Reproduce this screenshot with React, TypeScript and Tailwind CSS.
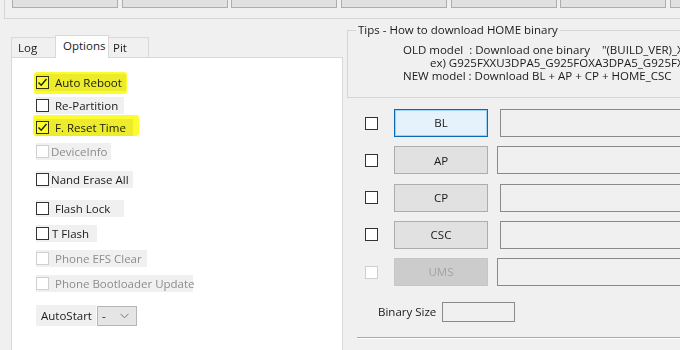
import React from "react"

type Opt = {
  label: string
  checked?: boolean
  disabled?: boolean
  gap: number
  width: number
  after: number
}

const options: Opt[] = [
  { label: "Auto Reboot", checked: true, gap: 6, width: 90, after: 6 },
  { label: "Re-Partition", gap: 6, width: 88, after: 5 },
  { label: "F. Reset Time", checked: true, gap: 6, width: 97, after: 7 },
  { label: "DeviceInfo", disabled: true, gap: 2, width: 75, after: 11 },
  { label: "Nand Erase All", gap: 2, width: 97, after: 12 },
  { label: "Flash Lock", gap: 6, width: 88, after: 8 },
  { label: "T Flash", gap: 3, width: 61, after: 8 },
  { label: "Phone EFS Clear", disabled: true, gap: 6, width: 111, after: 8 },
  { label: "Phone Bootloader Update", disabled: true, gap: 6, width: 157, after: 13 },
]

const topButtons = [0, 1, 2, 3, 4, 5, 6]

const slots = [
  { name: "BL", focus: true, field: 500 },
  { name: "AP", field: 497 },
  { name: "CP", field: 500 },
  { name: "CSC", field: 500 },
  { name: "UMS", disabled: true, field: 497 },
]

function Box({ checked, disabled }: { checked?: boolean; disabled?: boolean }) {
  return (
    <span
      className={`w-[13px] h-[13px] shrink-0 bg-white border flex items-center justify-center ${
        disabled ? "border-[#cfcfcf]" : "border-[#333333]"
      }`}
    >
      {checked && (
        <svg width="11" height="11" viewBox="0 0 11 11">
          <polyline points="1.5,5.5 4.2,8.3 9.5,2" fill="none" stroke="#222" strokeWidth="1.4" />
        </svg>
      )}
    </span>
  )
}

export default function App() {
  return (
    <div
      className="w-[680px] h-[350px] overflow-hidden bg-[#f0f0f0] text-[#1a1a1a] text-[11.5px] leading-none"
      style={{ fontFamily: '"Open Sans", "Noto Sans", sans-serif' }}
    >
      <div className="ml-[4px] h-[19px] border-l border-b border-[#d6d6d6] flex gap-[3.7px] pl-[7px] overflow-hidden">
        {topButtons.map((b) => (
          <div key={b} className="w-[106px] h-[8px] shrink-0 bg-[#e1e1e1] border-x border-b border-[#adadad]" />
        ))}
      </div>

      <div className="flex">
        {/* left tab panel */}
        <div className="ml-[11px] mt-[16px] w-[332px] shrink-0">
          <div className="flex items-end h-[22px]">
            <div className="w-[44px] h-[20px] border-t border-l border-[#d9d9d9] bg-[#f0f0f0] pl-[6px] flex items-center">Log</div>
            <div className="w-[54px] h-[23px] border-t border-x border-[#d9d9d9] bg-white relative z-10 mb-[-1px] pl-[7px] pt-[4px]">Options</div>
            <div className="w-[40px] h-[20px] border-t border-r border-[#d9d9d9] bg-[#f0f0f0] pl-[4px] flex items-center">Pit</div>
          </div>
          <div className="relative h-[300px] bg-white border border-[#d9d9d9] pt-[16px] pl-[24px]">
            <div className="flex flex-col">
              {options.map((o) => (
                <div
                  key={o.label}
                  className="h-[17px] bg-[#f0f0f0] flex items-center whitespace-nowrap"
                  style={{ width: o.width, marginBottom: o.after }}
                >
                  <Box checked={o.checked} disabled={o.disabled} />
                  <span className={o.disabled ? "text-[#8c8c8c]" : ""} style={{ marginLeft: o.gap }}>
                    {o.label}
                  </span>
                </div>
              ))}
              <div className="flex items-center h-[21px]">
                <div className="h-[21px] w-[60px] bg-[#f0f0f0] flex items-center pl-[5px]">AutoStart</div>
                <div className="ml-[1px] h-[20px] w-[40px] bg-[#e5e5e5] border border-[#b5b5b5] flex items-center pl-[4px]">
                  <span>-</span>
                  <svg className="ml-auto mr-[7px]" width="9" height="6" viewBox="0 0 9 6">
                    <polyline points="0.5,0.8 4.5,4.8 8.5,0.8" fill="none" stroke="#777" strokeWidth="1" />
                  </svg>
                </div>
              </div>
            </div>
            <span className="absolute left-[22px] top-[14px] w-[93px] h-[22px] rounded-[3px] bg-[#fbfb2e] mix-blend-multiply" />
            <span className="absolute left-[21px] top-[57px] w-[106px] h-[21px] rounded-[3px] bg-[#fbfb2e] mix-blend-multiply" />
          </div>
        </div>

        {/* right area */}
        <div className="pl-[4px] w-[400px] shrink-0">
          <fieldset className="mt-[4px] w-[400px] border border-[#d6d6d6] p-0 pb-[15px]">
            <legend className="ml-[8px] px-[2px] leading-[14px]">Tips - How to download HOME binary</legend>
            <div className="mt-[6px] pl-[55px] leading-[13px] whitespace-nowrap overflow-hidden">
              <div>OLD model&nbsp; : Download one binary &nbsp;&nbsp; "(BUILD_VER)_XXX</div>
              <div className="pl-[27px]">ex) G925FXXU3DPA5_G925FOXA3DPA5_G925FXX</div>
              <div>NEW model : Download BL + AP + CP + HOME_CSC</div>
            </div>
          </fieldset>

          <div className="mt-[11px] flex flex-col gap-[9.25px]">
            {slots.map((s) => (
              <div key={s.name} className="flex items-center h-[28px]">
                <span className="ml-[18px]">
                  <Box disabled={s.disabled} />
                </span>
                <div
                  className={`ml-[16px] w-[94px] h-[28px] shrink-0 flex items-center justify-center border ${
                    s.focus
                      ? "border-[#0a6ab5] bg-[#e5f1fb] shadow-[inset_0_0_0_1px_#9fd0f5]"
                      : s.disabled
                        ? "border-[#c6c6c6] bg-[#cccccc] text-[#a3a3a3]"
                        : "border-[#adadad] bg-[#e1e1e1]"
                  }`}
                >
                  {s.name}
                </div>
                <div
                  className="h-[28px] w-[260px] shrink-0 border border-[#8a8a8a] bg-[#f0f0f0]"
                  style={{ marginLeft: s.field - 488 }}
                />
              </div>
            ))}
          </div>

          <div className="mt-[16px] flex items-center">
            <span className="ml-[31px]">Binary Size</span>
            <div className="ml-[6px] w-[73px] h-[20px] border border-[#8a8a8a] bg-[#f0f0f0]" />
          </div>
          <div className="mt-[15px] ml-[10px] w-[330px] border-t border-[#a9a9a9] border-b border-b-white h-[2px]" />
        </div>
      </div>
    </div>
  )
}
